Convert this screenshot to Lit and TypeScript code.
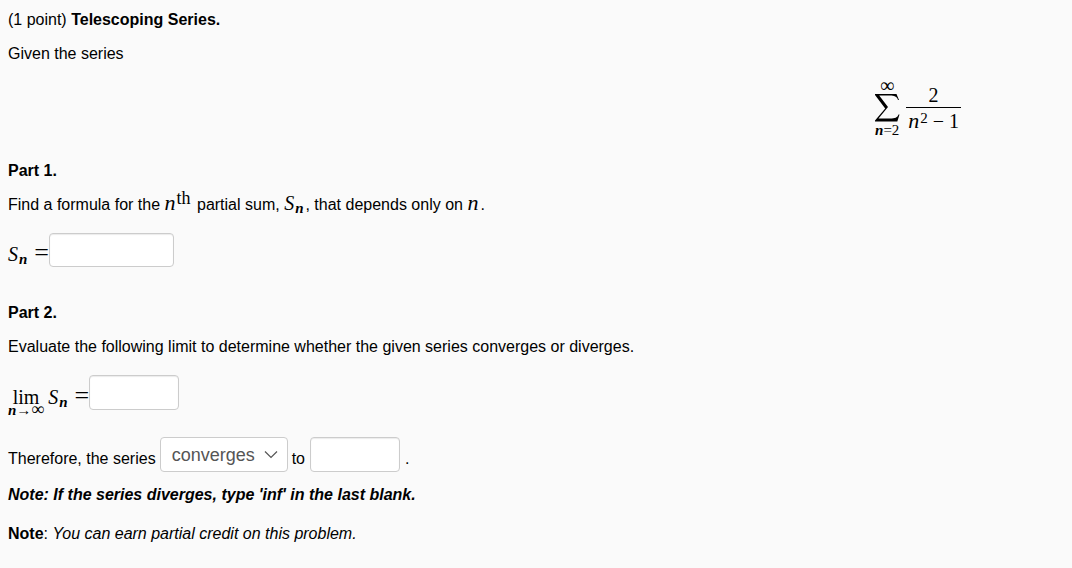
import { LitElement, html, css } from "lit";
import { customElement, state } from "lit/decorators.js";

@customElement("app-root")
export class AppRoot extends LitElement {
  static styles = css`
    :host {
      display: block;
      min-height: 100vh;
      background: #fafafa;
      color: #000;
      font-family: "Liberation Sans", Arial, sans-serif;
      font-size: 16px;
      line-height: 24px;
    }
    * {
      box-sizing: border-box;
    }
    .problem {
      padding: 8px;
    }
    p,
    h2 {
      margin: 0 0 10px;
      font-size: 16px;
    }
    .part {
      margin-top: 22px;
    }
    .part.second {
      margin-top: 34px;
    }
    .answer {
      display: flex;
      flex-wrap: wrap;
      align-items: flex-end;
      margin-top: 16px;
    }
    .answer > label,
    .answer > .stop {
      padding-bottom: 1px;
    }
    .math {
      display: inline-flex;
      align-items: baseline;
      font-family: "Liberation Serif", "Times New Roman", serif;
      font-size: 20px;
      white-space: nowrap;
    }
    .inline {
      display: inline;
      margin-right: 2px;
      line-height: 0;
    }
    .n {
      font-size: 22px;
      line-height: 0;
    }
    .sub,
    .sup {
      font-size: 15px;
      line-height: 0;
    }
    .sub {
      margin-left: 1px;
      font-weight: bold;
      vertical-align: -3px;
    }
    .sup {
      margin-left: 1px;
      vertical-align: 5px;
    }
    .inline .sup {
      font-size: 18px;
      vertical-align: 6px;
    }
    .eq {
      margin-left: 7px;
      font-size: 26px;
    }
    .display {
      display: flex;
      justify-content: flex-end;
      align-items: center;
      gap: 6px;
      margin-top: 12px;
      padding-right: 103px;
    }
    .sum {
      display: flex;
      flex-direction: column;
      align-items: center;
    }
    .bound {
      font-size: 15px;
      line-height: 14px;
    }
    .bound i {
      font-weight: bold;
    }
    .bound.upper {
      font-size: 20px;
    }
    .infinity {
      font-size: 18px;
      line-height: 0;
    }
    .sigma {
      display: block;
      width: 26px;
      height: 28px;
      margin: 2px 0 1px;
    }
    .fraction {
      display: flex;
      flex-direction: column;
      align-items: stretch;
      text-align: center;
      line-height: 24px;
    }
    .denominator {
      padding: 1px 2px 0;
      border-top: 1px solid #000;
    }
    .limit {
      display: flex;
      flex-direction: column;
      align-items: center;
      margin-right: 4px;
      height: 24px;
    }
    .limit .bound {
      margin-top: -6px;
    }
    input,
    select {
      height: 34px;
      border: 1px solid #ccc;
      border-radius: 4px;
      background: #fff;
      color: #555;
      font-family: inherit;
      font-size: 18px;
      margin: 0;
    }
    input {
      width: 90px;
      height: 35px;
      padding: 4px 6px;
      box-shadow: inset 0 1px 1px rgba(0, 0, 0, 0.08);
    }
    input.wide {
      width: 125px;
      height: 34px;
    }
    .picker {
      display: grid;
      align-items: center;
      width: 128px;
      margin: 0 4px;
    }
    .picker > * {
      grid-area: 1 / 1;
    }
    select {
      width: 100%;
      height: 35px;
      padding: 0 28px 0 11px;
      appearance: none;
    }
    .chevron {
      justify-self: end;
      width: 14px;
      height: 9px;
      margin-right: 10px;
      pointer-events: none;
    }
    .blank {
      margin: 0 5px;
    }
    .conclusion {
      margin-top: 27px;
      margin-bottom: 11px;
    }
    .hint {
      margin-bottom: 15px;
      font-weight: bold;
      font-style: italic;
    }
    .credit {
      margin: 0;
    }
  `;

  @state() private verdict = "converges";

  private partialSum() {
    return html`<span class="term"><i>S</i><i class="sub">n</i></span>`;
  }

  render() {
    return html`
      <main class="problem">
        <p>(1 point) <b>Telescoping Series.</b></p>
        <p>Given the series</p>

        <div class="math display">
          <div class="sum">
            <span class="bound upper">∞</span>
            <svg class="sigma" viewBox="0 0 26 28" aria-label="sum">
              <path
                d="M1 0H22.500L25 6H24C23 2.500 20 1.500 16 1.500H5.200L14 13L4.500 24.500H16C21 24.500 23.500 23.500 24.500 20.500H25.500L23.300 27.500H1V26.500L11.200 14.500L1 1Z"
              />
            </svg>
            <span class="bound"><i>n</i>=2</span>
          </div>
          <div class="fraction">
            <span>2</span>
            <span class="denominator"><i class="n">n</i><span class="sup">2</span> − 1</span>
          </div>
        </div>

        <h2 class="part">Part 1.</h2>
        <p>
          Find a formula for the
          <span class="math inline"><i class="n">n</i><span class="sup">th</span></span>
          partial sum, <span class="math inline">${this.partialSum()}</span>, that depends only on
          <span class="math inline"><i class="n">n</i></span>.
        </p>
        <div class="answer">
          <label class="math" for="formula">${this.partialSum()}<span class="eq">=</span></label>
          <input id="formula" class="wide" type="text" />
        </div>

        <h2 class="part second">Part 2.</h2>
        <p>Evaluate the following limit to determine whether the given series converges or diverges.</p>
        <div class="answer">
          <label class="math" for="limit">
            <span class="limit">
              <span>lim</span>
              <span class="bound"><i>n</i>→<span class="infinity">∞</span></span>
            </span>
            ${this.partialSum()}<span class="eq">=</span>
          </label>
          <input id="limit" type="text" />
        </div>

        <div class="answer conclusion">
          <label for="verdict">Therefore, the series</label>
          <span class="picker">
            <select
              id="verdict"
              .value=${this.verdict}
              @change=${(e: Event) => (this.verdict = (e.target as HTMLSelectElement).value)}
            >
              <option value="converges">converges</option>
              <option value="diverges">diverges</option>
            </select>
            <svg class="chevron" viewBox="0 0 14 9" aria-hidden="true">
              <path d="M1 1.500L7 7.500L13 1.500" fill="none" stroke="#555" stroke-width="1.200" />
            </svg>
          </span>
          <label for="value">to</label>
          <input id="value" class="blank" type="text" />
          <span class="stop">.</span>
        </div>

        <p class="hint">Note: If the series diverges, type 'inf' in the last blank.</p>
        <p class="credit"><b>Note</b>: <em>You can earn partial credit on this problem.</em></p>
      </main>
    `;
  }
}
